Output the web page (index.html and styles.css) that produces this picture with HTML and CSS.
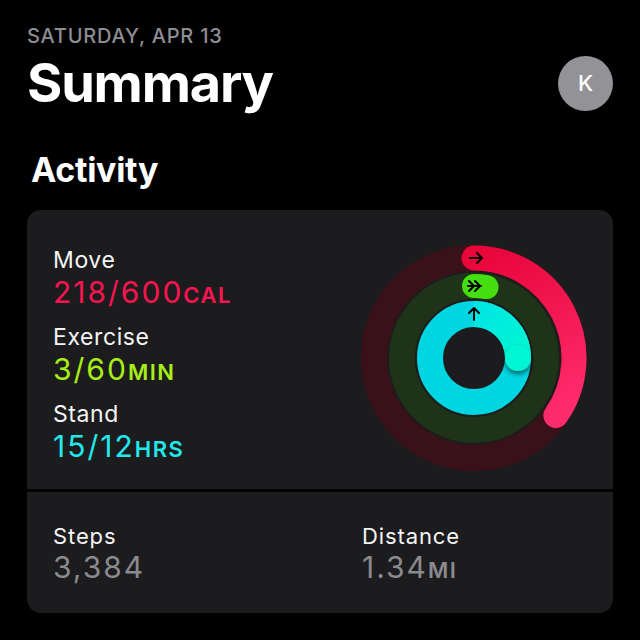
FILE: index.html
```html
<html>
  <head>
    <meta http-equiv="Content-Type" content="text/html; charset=utf-8" />
    <title>Summary</title>
    <link rel="stylesheet" href="styles.css">
  </head>
  <body>
    <div class="page">
      <div class="date">SATURDAY, APR 13</div>
      <div class="header">
        <h1>Summary</h1>
        <div class="avatar">K</div>
      </div>
      <h2>Activity</h2>

      <div class="card">
        <div class="card-top">
          <ul class="stats">
            <li>
              <div class="label">Move</div>
              <div class="value move">218/600<span class="unit">CAL</span></div>
            </li>
            <li>
              <div class="label">Exercise</div>
              <div class="value exercise">3/60<span class="unit">MIN</span></div>
            </li>
            <li>
              <div class="label">Stand</div>
              <div class="value stand">15/12<span class="unit">HRS</span></div>
            </li>
          </ul>

          <svg class="rings" width="240" height="240" viewBox="0 0 240 240">
            <defs>
              <linearGradient id="moveGrad" gradientUnits="userSpaceOnUse" x1="120" y1="20" x2="200" y2="180">
                <stop offset="0" stop-color="#e8063a" />
                <stop offset="1" stop-color="#ff2c6d" />
              </linearGradient>
              <linearGradient id="standGrad" gradientUnits="userSpaceOnUse" x1="120" y1="76" x2="164" y2="120">
                <stop offset="0" stop-color="#00e6e4" />
                <stop offset="1" stop-color="#00f6d2" />
              </linearGradient>
              <filter id="capShadow" x="-1" y="-1" width="3" height="3">
                <feDropShadow dx="0" dy="3" stdDeviation="2.5" flood-color="#000" flood-opacity="0.55" />
              </filter>
            </defs>

            <!-- tracks -->
            <circle cx="120" cy="120" r="100" fill="none" stroke="#3a1119" stroke-width="26" />
            <circle cx="120" cy="120" r="72" fill="none" stroke="#1e3317" stroke-width="26" />

            <!-- move -->
            <path d="M120 20 A100 100 0 0 1 201.9 177.4" fill="none" stroke="url(#moveGrad)" stroke-width="25" stroke-linecap="round" />
            <!-- exercise -->
            <path d="M120 48 A72 72 0 0 1 132.5 49.1" fill="none" stroke="#45de10" stroke-width="24" stroke-linecap="round" />
            <!-- stand, over 100% -->
            <circle cx="120" cy="120" r="44" fill="none" stroke="#00d6e2" stroke-width="26" />
            <path d="M120 76 A44 44 0 0 1 164 120" fill="none" stroke="url(#standGrad)" stroke-width="26" />
            <circle cx="164" cy="120" r="13" fill="#00f6d2" filter="url(#capShadow)" />

            <!-- arrows -->
            <g fill="none" stroke="#000" stroke-width="2" stroke-linecap="round" stroke-linejoin="round">
              <path d="M116 20 H128 M123 15 L128 20 L123 25" />
              <path d="M114 48 H127 M115 43 L120 48 L115 53 M121 43 L126 48 L121 53" />
              <path d="M120 82 V70 M115 75 L120 70 L125 75" />
            </g>
          </svg>
        </div>

        <div class="card-bottom">
          <div>
            <div class="label">Steps</div>
            <div class="value gray">3,384</div>
          </div>
          <div>
            <div class="label">Distance</div>
            <div class="value gray">1.34<span class="unit">MI</span></div>
          </div>
        </div>
      </div>
    </div>
  </body>
</html>
```

FILE: styles.css
```css
body {
  margin: 0;
  background: #000;
  color: #fff;
  font-family: "Inter", "Liberation Sans", sans-serif;
}

.page {
  padding: 24px 27px 0 27px;
}

.date {
  font-size: 20px;
  line-height: 24px;
  font-weight: 500;
  color: #8d8d92;
  letter-spacing: 0.8px;
}

.header {
  display: flex;
  justify-content: space-between;
  align-items: center;
  margin-top: 3px;
}

h1 {
  margin: 0;
  font-size: 54px;
  line-height: 64px;
  font-weight: 700;
  letter-spacing: -1.2px;
}

.avatar {
  width: 55px;
  height: 55px;
  border-radius: 50%;
  background: #929297;
  color: #fff;
  font-size: 22px;
  font-weight: 500;
  display: flex;
  align-items: center;
  justify-content: center;
}

h2 {
  margin: 35px 0 0 4px;
  font-size: 34px;
  line-height: 40px;
  font-weight: 700;
  letter-spacing: -0.3px;
}

.card {
  margin-top: 20px;
  background: #1c1c1e;
  border-radius: 14px;
  overflow: hidden;
}

.card-top {
  display: flex;
  border-bottom: 3px solid #000;
}

.stats {
  list-style-type: none;
  margin: 0;
  padding: 36px 0 0 26px;
}

.stats li {
  margin-bottom: 14px;
}

.label {
  font-size: 23px;
  line-height: 29px;
  color: #f4f4f4;
  letter-spacing: 0.6px;
}

.value {
  font-size: 30px;
  line-height: 34px;
  letter-spacing: 2px;
}

.unit {
  font-size: 22px;
  line-height: 1;
  font-weight: 600;
  letter-spacing: 1.5px;
}

.move { color: #fa1450; }
.exercise { color: #a6ee16; }
.stand { color: #22e8ea; }
.gray { color: #8a8a8f; }

.rings {
  margin: 28px 19px 11px auto;
}

.card-bottom {
  display: grid;
  grid-template-columns: 309px 1fr;
  padding: 31px 26px 29px 26px;
}

.card-bottom .label {
  font-size: 22px;
  line-height: 27px;
  letter-spacing: 0.9px;
}
```
